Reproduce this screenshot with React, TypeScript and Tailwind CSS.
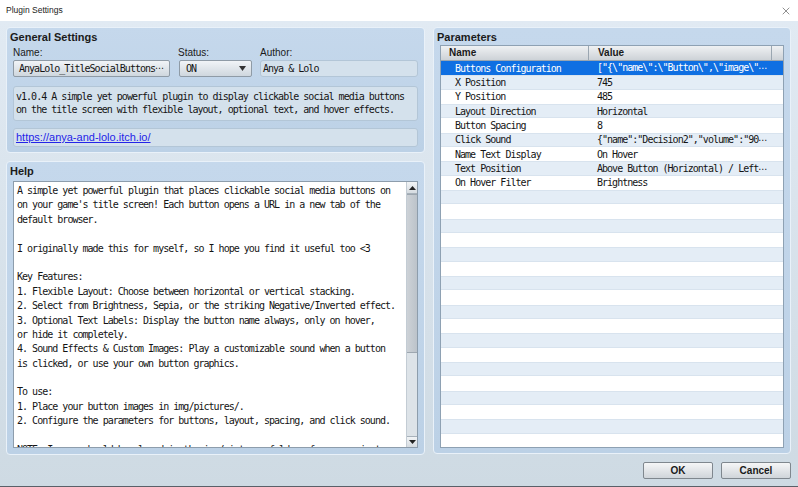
import { X } from "lucide-react"

const helpLines = [
  "A simple yet powerful plugin that places clickable social media buttons on",
  "on your game's title screen! Each button opens a URL in a new tab of the",
  "default browser.",
  "",
  "I originally made this for myself, so I hope you find it useful too <3",
  "",
  "Key Features:",
  "1. Flexible Layout: Choose between horizontal or vertical stacking.",
  "2. Select from Brightness, Sepia, or the striking Negative/Inverted effect.",
  "3. Optional Text Labels: Display the button name always, only on hover,",
  "or hide it completely.",
  "4. Sound Effects & Custom Images: Play a customizable sound when a button",
  "is clicked, or use your own button graphics.",
  "",
  "To use:",
  "1. Place your button images in img/pictures/.",
  "2. Configure the parameters for buttons, layout, spacing, and click sound.",
  "",
  "NOTE: Images should be placed in the img/pictures folder of your project.",
]

// values that end with an ellipsis are cut in the list
const params: [string, string, boolean][] = [
  ["Buttons Configuration", '["{\\"name\\":\\"Button\\",\\"image\\"', true],
  ["X Position", "745", false],
  ["Y Position", "485", false],
  ["Layout Direction", "Horizontal", false],
  ["Button Spacing", "8", false],
  ["Click Sound", '{"name":"Decision2","volume":"90', true],
  ["Name Text Display", "On Hover", false],
  ["Text Position", "Above Button (Horizontal) / Left", true],
  ["On Hover Filter", "Brightness", false],
]

const rows = Array.from({ length: 28 }, (_, i) => params[i] ?? ["", "", false])

function Dots() {
  return <span className="font-['DejaVu_Sans',sans-serif] tracking-normal text-[9px]">⋯</span>
}

function Panel({ className, children }: { className: string; children: React.ReactNode }) {
  return (
    <div
      className={
        "rounded-[4px] border border-[#e9f1f9] bg-linear-to-b from-[#c5d8ec] to-[#bcd1e6] px-[6px] pt-[1px] flex flex-col " +
        className
      }
    >
      {children}
    </div>
  )
}

function PanelTitle({ children }: { children: React.ReactNode }) {
  return (
    <div className="h-[16px] leading-[16px] -ml-[3px] text-[11px] font-bold text-[#1a1a1a]">{children}</div>
  )
}

function GeneralSettings() {
  return (
    <Panel className="h-[126px]">
      <PanelTitle>General Settings</PanelTitle>
      <div className="flex h-[15px] leading-[15px] text-[10px] text-[#1a1a1a]">
        <span className="w-[157px]">Name:</span>
        <span className="ml-[8px] w-[74px]">Status:</span>
        <span className="ml-[8px]">Author:</span>
      </div>
      <div className="flex h-[17px]">
        <div className="w-[157px] flex items-center pl-[5px] border border-[#8f9ba6] rounded-[2px] bg-linear-to-b from-[#f1f4f7] to-[#cfd7de] font-['DejaVu_Sans_Mono',monospace] text-[10px] tracking-[-0.98px] text-[#141414] whitespace-nowrap overflow-hidden">
          AnyaLolo_TitleSocialButtons <Dots />
        </div>
        <div className="ml-[9px] w-[73px] flex items-center justify-between pl-[6px] pr-[5px] border border-[#8f9ba6] rounded-[2px] bg-linear-to-b from-[#f1f4f7] to-[#cfd7de] font-['DejaVu_Sans_Mono',monospace] text-[10px] tracking-[-0.98px] text-[#141414]">
          <span>ON</span>
          <svg width="7" height="5" viewBox="0 0 7 5">
            <path d="M0 0H7L3.5 5Z" fill="#333" />
          </svg>
        </div>
        <div className="ml-[8px] flex-1 flex items-center pl-[2px] border border-[#b3c6d7] rounded-[3px] bg-[#d4e1ec] font-['DejaVu_Sans_Mono',monospace] text-[10px] tracking-[-0.98px] text-[#141414]">
          Anya &amp; Lolo
        </div>
      </div>
      <div className="mt-[9px] h-[35px] border border-[#b3c6d7] rounded-[3px] bg-[#d4e1ec] pl-[2px] pt-[3px] font-['DejaVu_Sans_Mono',monospace] text-[10px] leading-[13.3px] tracking-[-0.98px] text-[#141414] whitespace-nowrap overflow-hidden">
        <div>v1.0.4 A simple yet powerful plugin to display clickable social media buttons</div>
        <div>on the title screen with flexible layout, optional text, and hover effects.</div>
      </div>
      <div className="mt-[7px] h-[19px] flex items-center border border-[#b3c6d7] rounded-[3px] bg-[#d4e1ec] pl-[2px]">
        <span className="text-[11px] text-[#2424e8] underline">https://anya-and-lolo.itch.io/</span>
      </div>
    </Panel>
  )
}

function Help() {
  return (
    <Panel className="h-[294px]">
      <PanelTitle>Help</PanelTitle>
      <div className="mt-[2px] h-[267px] flex border border-[#8d9dac] bg-white">
        <div className="flex-1 overflow-hidden pl-[3px] pt-[2px] font-['DejaVu_Sans_Mono',monospace] text-[10px] leading-[14.4px] tracking-[-0.98px] text-[#141414] whitespace-pre">
          {helpLines.map((l, i) => (
            <div key={i} className="h-[14.4px]">
              {l}
            </div>
          ))}
        </div>
        <div className="w-[11px] flex flex-col bg-[#dde3e8] border-l border-[#c3ccd4]">
          <div className="h-[12px] flex items-center justify-center bg-linear-to-b from-[#f2f4f6] to-[#d6dce1] border-b border-[#a8b2bb]">
            <svg width="7" height="4" viewBox="0 0 7 4">
              <path d="M0 4H7L3.5 0Z" fill="#222" />
            </svg>
          </div>
          <div className="h-[159px] bg-linear-to-r from-[#cdd2d7] to-[#bcc3ca] border-y border-[#9ea7b0]" />
          <div className="flex-1" />
          <div className="h-[11px] flex items-center justify-center bg-linear-to-b from-[#f2f4f6] to-[#d6dce1] border-t border-[#a8b2bb]">
            <svg width="7" height="4" viewBox="0 0 7 4">
              <path d="M0 0H7L3.5 4Z" fill="#222" />
            </svg>
          </div>
        </div>
      </div>
    </Panel>
  )
}

function Parameters() {
  return (
    <Panel className="w-[358px] h-[427px]">
      <PanelTitle>Parameters</PanelTitle>
      <div className="h-[403px] border border-[#8ea1b3] bg-white overflow-hidden flex flex-col">
        <div className="h-[15px] shrink-0 flex bg-linear-to-b from-[#eff1f3] to-[#cdd2d7] border-b border-[#9aa6b1] text-[10px] font-bold text-[#1a1a1a] leading-[14px]">
          <div className="w-[148px] pl-[8px] border-r border-[#9aa6b1]">Name</div>
          <div className="w-[183px] pl-[9px] border-r border-[#9aa6b1]">Value</div>
          <div className="flex-1" />
        </div>
        {rows.map(([name, value, cut], i) => (
          <div
            key={i}
            className={
              "h-[14.33px] shrink-0 flex items-center font-['DejaVu_Sans_Mono',monospace] text-[10px] tracking-[-0.98px] whitespace-nowrap " +
              (i === 0
                ? "bg-[#0f6fe2] text-white"
                : i % 2 === 1
                  ? "bg-[#e4edf6] text-[#141414] border-y border-[#d8e3ee]"
                  : "bg-white text-[#141414]")
            }
          >
            <div className="w-[148px] pl-[14px] overflow-hidden">{name}</div>
            <div className="flex-1 pl-[8px] overflow-hidden">
              {value}
              {cut && <Dots />}
            </div>
          </div>
        ))}
      </div>
    </Panel>
  )
}

function Btn({ children }: { children: React.ReactNode }) {
  return (
    <div className="w-[70px] h-[17px] flex items-center justify-center border border-[#7f878e] rounded-[2px] bg-linear-to-b from-[#f5f6f7] to-[#d0d5da] text-[10px] font-bold text-[#1a1a1a]">
      {children}
    </div>
  )
}

export default function App() {
  return (
    <div className="w-[798px] h-[487px] flex flex-col overflow-hidden font-['Liberation_Sans',Arial,sans-serif] text-[#1b1b1b] select-none">
      <div className="h-[21px] shrink-0 bg-white flex items-center justify-between pl-[6px] pr-[6px]">
        <span className="text-[8.5px] text-[#222]">Plugin Settings</span>
        <X size={12} strokeWidth={1.1} className="text-[#333]" />
      </div>
      <div className="flex-1 flex flex-col bg-linear-to-b from-[#e1eaf3] to-[#cedae3] border-b border-[#5a6068] px-[6px] pt-[6px]">
        <div className="flex items-start gap-[8px]">
          <div className="w-[419px] flex flex-col gap-[8px]">
            <GeneralSettings />
            <Help />
          </div>
          <Parameters />
        </div>
        <div className="flex justify-end gap-[8px] pr-[1px] mt-[7px]">
          <Btn>OK</Btn>
          <Btn>Cancel</Btn>
        </div>
      </div>
    </div>
  )
}
